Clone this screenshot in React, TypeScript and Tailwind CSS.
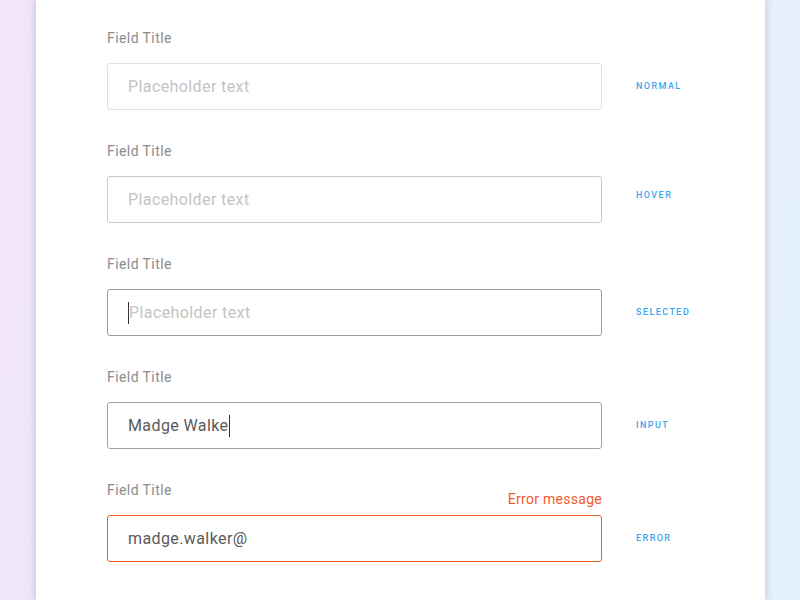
import React from 'react'

type FieldState = 'normal' | 'hover' | 'selected' | 'input' | 'error'

interface FieldProps {
  state: FieldState
  label: string
  value?: string
  error?: string
}

const borderByState: Record<FieldState, string> = {
  normal: 'border-[#e2e2e2]',
  hover: 'border-[#c9c9c9]',
  selected: 'border-[#9b9b9b]',
  input: 'border-[#a3a3a3]',
  error: 'border-[#f05a28]',
}

const Caret = () => <span className="inline-block w-px h-[22px] bg-[#333] align-middle" />

const Field: React.FC<FieldProps> = ({ state, label, value, error }) => {
  return (
    <div className="flex flex-col">
      <div className="flex justify-between w-[495px] h-[35px]">
        <span className="text-[14px] leading-5 tracking-[0.03em] text-[#8c8c8c]">Field Title</span>
        {error && (
          <span className="self-end mb-[6px] text-[14px] leading-5 tracking-[0.02em] text-[#f05a28]">{error}</span>
        )}
      </div>
      <div className="flex items-center">
        <div
          className={`w-[495px] h-[47px] rounded-[3px] border ${borderByState[state]} flex items-center pl-5 text-[16px] tracking-[0.025em]`}
        >
          {state === 'selected' && <Caret />}
          {value ? (
            <span className="text-[#5a5a5a] flex items-center">
              {value}
              {state === 'input' && <Caret />}
            </span>
          ) : (
            <span className="text-[#c4c4c4]">Placeholder text</span>
          )}
        </div>
        <span
          className={`ml-[34px] text-[9px] font-medium tracking-[0.16em] text-[#3aa5f0] uppercase ${
            state === 'hover' ? 'mb-2' : ''
          }`}
        >
          {label}
        </span>
      </div>
    </div>
  )
}

export default function App() {
  return (
    <div
      className="w-[800px] h-[600px] overflow-hidden flex bg-[linear-gradient(100deg,#f2e5fb_0%,#ebeafd_50%,#e4f1fd_100%)]"
      style={{ fontFamily: 'Roboto, "Noto Sans", sans-serif' }}
    >
      <div className="ml-9 w-[729px] h-full bg-white shadow-[0_0_8px_rgba(60,40,90,0.25)] pl-[71px] pt-[28px] flex flex-col gap-[31px]">
        <Field state="normal" label="Normal" />
        <Field state="hover" label="Hover" />
        <Field state="selected" label="Selected" />
        <Field state="input" label="Input" value="Madge Walke" />
        <Field state="error" label="Error" value="madge.walker@" error="Error message" />
      </div>
    </div>
  )
}
